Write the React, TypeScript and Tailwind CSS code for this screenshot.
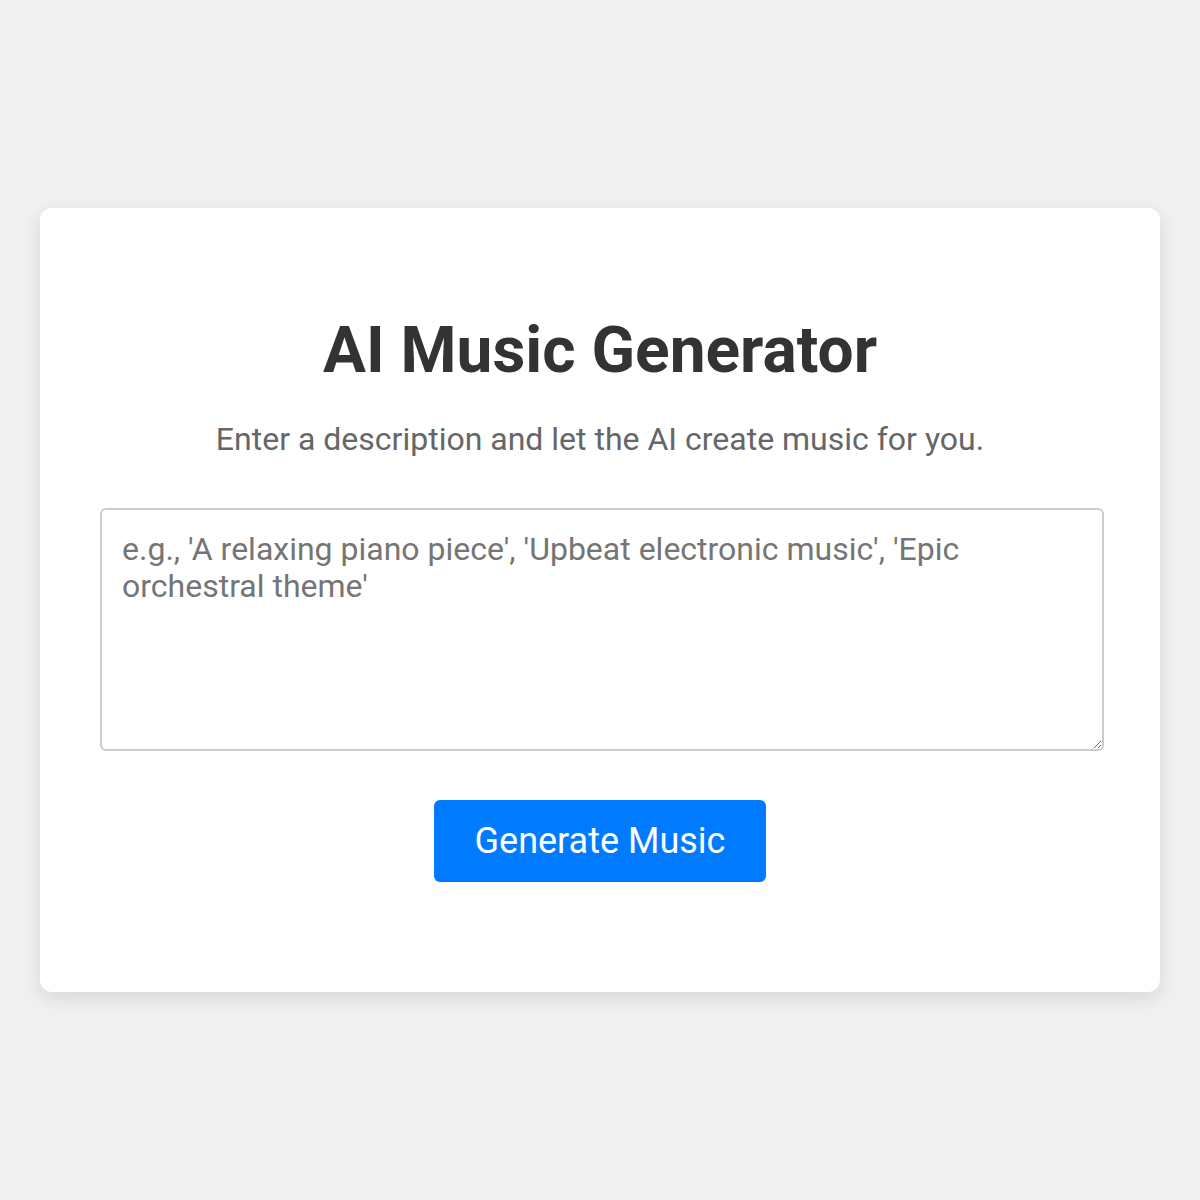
import { useState } from "react";

export default function App() {
  const [prompt, setPrompt] = useState("");

  return (
    <div
      className="min-h-screen flex items-center justify-center bg-[#f0f0f0] px-10"
      style={{ fontFamily: "Roboto, 'Liberation Sans', sans-serif" }}
    >
      <div className="w-full bg-white rounded-xl shadow-[0_6px_18px_rgba(0,0,0,0.1)] px-[60px] pt-[106px] pb-[110px] flex flex-col items-center">
        {/* Heading */}
        <h1 className="text-[64px] leading-[74px] font-bold text-[#333]">
          AI Music Generator
        </h1>
        <p className="mt-[32px] text-[32px] leading-[38px] text-[#666]">
          Enter a description and let the AI create music for you.
        </p>

        {/* Prompt */}
        <textarea
          value={prompt}
          onChange={(e) => setPrompt(e.target.value)}
          placeholder="e.g., 'A relaxing piano piece', 'Upbeat electronic music', 'Epic orchestral theme'"
          className="mt-[50px] self-start w-[calc(100%+4px)] h-[243px] border-2 border-[#ccc] rounded-md px-5 pt-[21px] pb-5 text-[32px] leading-[37px] text-[#333] placeholder:text-[#757575] outline-none"
        />

        <button className="mt-[49px] h-[82px] w-[332px] rounded-md bg-[#007bff] text-white text-[36px]">
          Generate Music
        </button>
      </div>
    </div>
  );
}
